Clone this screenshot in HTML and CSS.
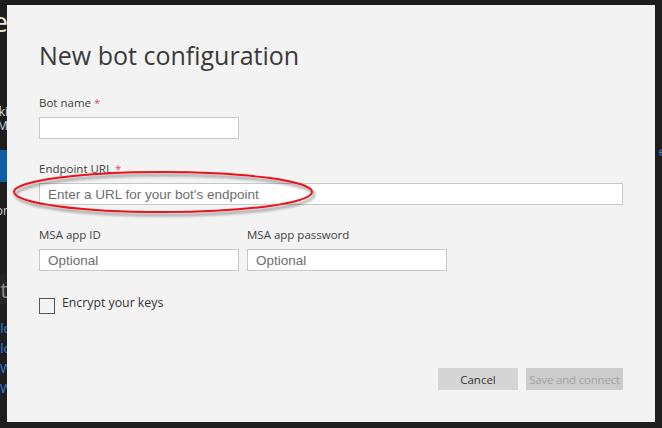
FILE: index.html
```html
<!DOCTYPE html>
<html>
<head>
<meta charset="utf-8">
<link rel="stylesheet" href="styles.css">
</head>
<body>
<div class="app">
  <div class="side">
    <div class="big-e">Welcome</div>
    <div class="line l-ki">Bookmarki</div>
    <div class="line l-m">MM</div>
    <div class="sel"></div>
    <div class="line l-or">Editor</div>
    <div class="band"><span class="big-ot">Bot</span></div>
    <div class="link l1 hel">Hello</div>
    <div class="link l2 hel">Hello</div>
    <div class="link l3 web">Web</div>
    <div class="link l4 web">Web</div>
  </div>
  <div class="right-frag">er</div>
</div>

<div class="dialog">
  <h1 class="title">New bot configuration</h1>
  <div class="field f-name">
    <label class="label">Bot name <span class="req">*</span></label>
    <input class="input short" type="text">
  </div>
  <div class="field f-url">
    <label class="label">Endpoint URL <span class="req">*</span></label>
    <input class="input wide" type="text" placeholder="Enter a URL for your bot's endpoint">
  </div>
  <div class="row f-msa">
    <div class="field">
      <label class="label">MSA app ID</label>
      <input class="input short" type="text" placeholder="Optional">
    </div>
    <div class="field">
      <label class="label">MSA app password</label>
      <input class="input short" type="text" placeholder="Optional">
    </div>
  </div>
  <label class="check">
    <span class="box"></span>
    <span class="check-text">Encrypt your keys</span>
  </label>
  <div class="footer">
    <button class="btn cancel">Cancel</button>
    <button class="btn save" disabled>Save and connect</button>
  </div>
</div>

<svg class="annot" width="320" height="60" viewBox="0 0 320 60">
  <defs>
    <filter id="sh" x="-10%" y="-30%" width="120%" height="170%">
      <feGaussianBlur in="SourceAlpha" stdDeviation="1.6"/>
      <feOffset dx="2" dy="3" result="b"/>
      <feComponentTransfer><feFuncA type="linear" slope="0.45"/></feComponentTransfer>
      <feMerge><feMergeNode/><feMergeNode in="SourceGraphic"/></feMerge>
    </filter>
  </defs>
  <ellipse cx="153" cy="24" rx="149" ry="20" fill="none" stroke="#e8141c" stroke-width="2" filter="url(#sh)"/>
</svg>
</body>
</html>
```
FILE: styles.css
```css
html, body {
  margin: 0;
  padding: 0;
}
body {
  width: 662px;
  height: 428px;
  background: #1e1e1e;
  overflow: hidden;
  position: relative;
  font-family: "Open Sans", "Noto Sans", sans-serif;
}
.app {
  height: 100%;
  display: flex;
  justify-content: space-between;
}
.side {
  width: 40px;
  display: flex;
  flex-direction: column;
  align-items: flex-end;
  margin-left: -32px;
  padding-top: 4px;
}
.big-e {
  font-size: 28px;
  line-height: 34px;
  color: #e8e4d8;
  white-space: nowrap;
}
.line {
  font-size: 12px;
  line-height: 14px;
  color: #d4d4d4;
  white-space: nowrap;
}
.l-ki { margin-top: 67px; }
.l-m { color: #c8d8ea; }
.sel {
  align-self: stretch;
  height: 32px;
  background: #0e5ea6;
  margin-top: 17px;
  margin-right: -20px;
}
.l-or { margin-top: 22px; }
.band {
  align-self: stretch;
  height: 30px;
  margin-top: 56px;
  margin-right: -20px;
  background: #252526;
  display: flex;
  justify-content: flex-end;
}
.big-ot {
  font-size: 22px;
  line-height: 30px;
  color: #8a8a8a;
  margin-right: 20px;
}
.link {
  font-size: 13px;
  line-height: 20px;
  color: #3b7fd6;
  align-self: flex-start;
  white-space: nowrap;
}
.hel { margin-left: 12px; }
.web { margin-left: 32px; }
.l1 { margin-top: 14px; }
.right-frag {
  font-size: 13px;
  color: #3b7fd6;
  margin-top: 142px;
  margin-right: -9px;
}

.dialog {
  position: absolute;
  left: 7px;
  top: 5px;
  width: 648px;
  height: 417px;
  box-sizing: border-box;
  background: #f3f3f3;
  padding: 33px 32px 32px 32px;
  display: flex;
  flex-direction: column;
  color: #333;
}
.title {
  margin: 0;
  font-size: 25px;
  line-height: 34px;
  font-weight: 400;
  color: #3a3a3a;
}
.field {
  display: flex;
  flex-direction: column;
}
.label {
  font-size: 11.5px;
  line-height: 16px;
  color: #3f3f3f;
  margin-bottom: 6px;
}
.req { color: #e5476a; }
.f-name { margin-top: 23px; }
.f-url { margin-top: 22px; }
.f-msa { margin-top: 22px; }
.row {
  display: flex;
  gap: 8px;
}
.input {
  box-sizing: border-box;
  height: 22px;
  border: 1px solid #c8c8c8;
  background: #fff;
  padding: 0 8px;
  font-family: "Liberation Sans", Arial, sans-serif;
  font-size: 13.5px;
  color: #333;
  outline: none;
  margin: 0;
}
.input::placeholder { color: #6e6e6e; }
.short { width: 200px; }
.wide { width: 584px; }
.check {
  display: flex;
  align-items: center;
  gap: 7px;
  margin-top: 27px;
}
.box {
  width: 16px;
  height: 16px;
  box-sizing: border-box;
  border: 1px solid #555;
  background: #f3f3f3;
}
.check-text {
  font-size: 12.3px;
  line-height: 16px;
  color: #333;
  margin-top: -7px;
}
.footer {
  margin-top: auto;
  display: flex;
  justify-content: flex-end;
  gap: 8px;
}
.btn {
  height: 22px;
  border: none;
  font-family: "Open Sans", "Noto Sans", sans-serif;
  font-size: 11.5px;
  padding: 0;
  margin: 0;
  white-space: nowrap;
}
.cancel {
  width: 80px;
  background: #d5d5d5;
  color: #333;
}
.save {
  width: 97px;
  background: #cccccc;
  color: #a3a3a3;
  letter-spacing: -0.2px;
}
.annot {
  position: absolute;
  left: 10px;
  top: 168px;
  overflow: visible;
}
```
